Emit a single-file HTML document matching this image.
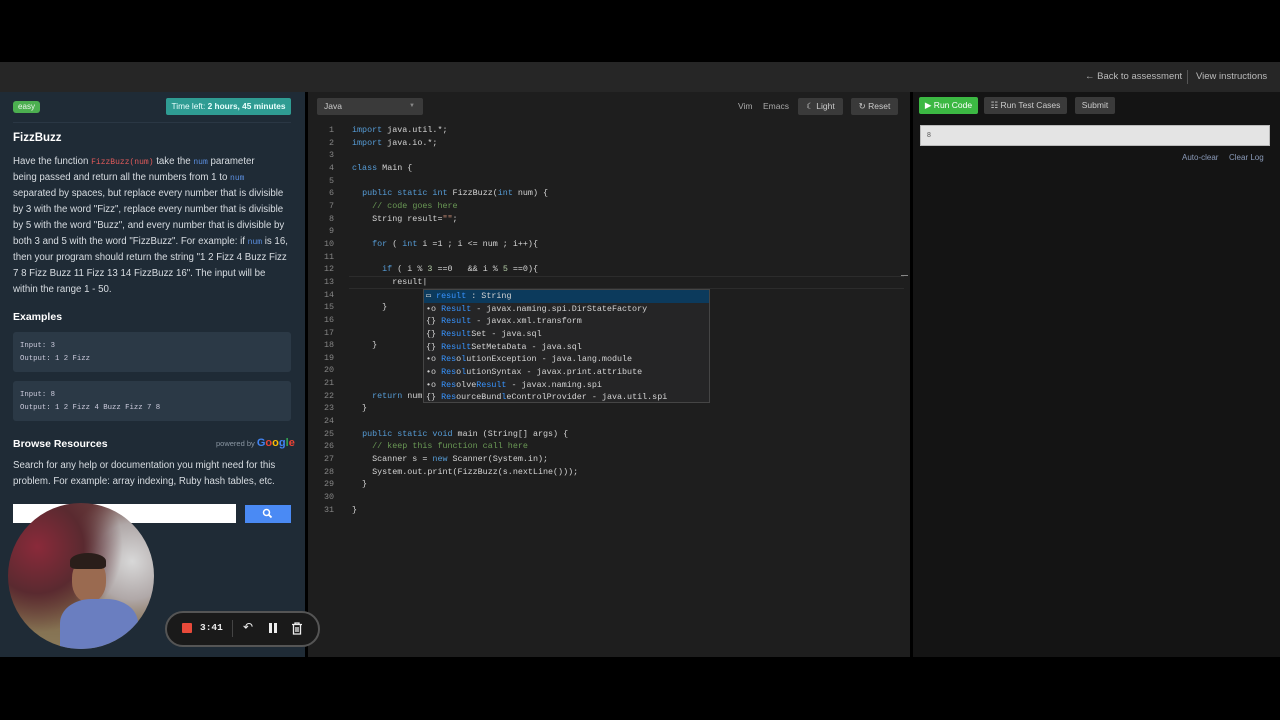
<!DOCTYPE html>
<html><head><meta charset="utf-8"><style>
*{box-sizing:border-box;margin:0;padding:0}
body{width:1280px;height:720px;background:#000;position:relative;overflow:hidden;font-family:"Liberation Sans",sans-serif}
.abs{position:absolute}
.top{left:0;top:62px;width:1280px;height:30px;background:#262626}
.left{left:0;top:92px;width:305px;height:565px;background:#1f2b36}
.ed{left:308px;top:92px;width:602px;height:565px;background:#1e1e1e}
.right{left:913px;top:92px;width:367px;height:565px;background:#141414}
.txt{color:#d8dde2;font-size:9.7px;line-height:16px}
.txt .mono{line-height:0;font-size:8px;vertical-align:baseline}
.mono{font-family:"Liberation Mono",monospace}
.code{left:310px;top:124px;font-family:"Liberation Mono",monospace;font-size:8.4px;line-height:12.65px;color:#d4d4d4;white-space:pre}
.ln{display:inline-block;width:24px;text-align:right;color:#858585;margin-right:18px}
.k{color:#569cd6}.c{color:#6a9955}.s{color:#ce9178}.n{color:#b5cea8}
.ac{left:423px;top:289px;width:287px;height:114px;background:#252526;border:1px solid #454545;font-family:"Liberation Mono",monospace;font-size:8.4px;line-height:12.65px;color:#d4d4d4;white-space:pre;padding-left:2px}
.ac div.sel{background:#0c3a5c;margin-left:-2px;padding-left:2px}
.ac b{color:#3794ff;font-weight:normal}
.btn{border-radius:2px;font-size:8.5px;color:#ccc;text-align:center;line-height:16px}
</style></head><body>
<div class="abs top"></div>
<div class="abs" style="left:1085px;top:71px;font-size:9.5px;color:#bbb">← Back to assessment</div>
<div class="abs" style="left:1187px;top:70px;width:1px;height:14px;background:#555"></div>
<div class="abs" style="left:1196px;top:71px;font-size:9.5px;color:#bbb">View instructions</div>

<div class="abs left"></div>
<div class="abs ed"></div>
<div class="abs right"></div>

<div class="abs" style="left:13px;top:101px;width:27px;height:12px;background:#4caf50;border-radius:3px;font-size:8px;color:#e8f5e9;text-align:center;line-height:12px">easy</div>
<div class="abs" style="left:166px;top:98px;width:125px;height:17px;background:#2f9c93;border-radius:2px;font-size:8.3px;color:#e8fffd;text-align:center;line-height:17px">Time left: <b>2 hours, 45 minutes</b></div>
<div class="abs" style="left:13px;top:122px;width:278px;height:1px;background:#2a3744"></div>
<div class="abs" style="left:13px;top:132px;font-size:11.5px;font-weight:bold;color:#fff">FizzBuzz</div>
<div class="abs txt" style="left:13px;top:154px;width:292px;white-space:nowrap">Have the function <span class="mono" style="color:#e05a5a">FizzBuzz(num)</span> take the <span class="mono" style="color:#5b8fe0">num</span> parameter<br>being passed and return all the numbers from 1 to <span class="mono" style="color:#5b8fe0">num</span><br>separated by spaces, but replace every number that is divisible<br>by 3 with the word "Fizz", replace every number that is divisible<br>by 5 with the word "Buzz", and every number that is divisible by<br>both 3 and 5 with the word "FizzBuzz". For example: if <span class="mono" style="color:#5b8fe0">num</span> is 16,<br>then your program should return the string "1 2 Fizz 4 Buzz Fizz<br>7 8 Fizz Buzz 11 Fizz 13 14 FizzBuzz 16". The input will be<br>within the range 1 - 50.</div>
<div class="abs" style="left:13px;top:311px;font-size:10.5px;font-weight:bold;color:#fff">Examples</div>
<div class="abs mono" style="left:13px;top:332px;width:278px;height:40px;background:#2b3946;border-radius:3px;padding:8px 7px;font-size:7.3px;line-height:13px;color:#ccd">Input: 3<br>Output: 1 2 Fizz</div>
<div class="abs mono" style="left:13px;top:381px;width:278px;height:40px;background:#2b3946;border-radius:3px;padding:8px 7px;font-size:7.3px;line-height:13px;color:#ccd">Input: 8<br>Output: 1 2 Fizz 4 Buzz Fizz 7 8</div>
<div class="abs" style="left:13px;top:438px;font-size:10.5px;font-weight:bold;color:#fff">Browse Resources</div>
<div class="abs" style="left:216px;top:437px;font-size:7.5px;color:#8a96a2">powered by <span style="font-size:11px;font-weight:bold"><span style="color:#4285f4">G</span><span style="color:#ea4335">o</span><span style="color:#fbbc05">o</span><span style="color:#4285f4">g</span><span style="color:#34a853">l</span><span style="color:#ea4335">e</span></span></div>
<div class="abs txt" style="left:13px;top:458px;width:292px;white-space:nowrap">Search for any help or documentation you might need for this<br>problem. For example: array indexing, Ruby hash tables, etc.</div>
<div class="abs" style="left:13px;top:504px;width:223px;height:19px;background:#fff"></div>
<div class="abs" style="left:245px;top:505px;width:46px;height:18px;background:#4a8af4"></div>
<svg class="abs" style="left:262px;top:508px" width="11" height="11" viewBox="0 0 11 11"><circle cx="4.5" cy="4.5" r="3" fill="none" stroke="#fff" stroke-width="1.5"/><path d="M6.5 6.5l3 3" stroke="#fff" stroke-width="1.8"/></svg>
<div class="abs" style="left:8px;top:503px;width:146px;height:146px;border-radius:50%;overflow:hidden;background:radial-gradient(circle at 20% 30%,#8a2a3a 0,#5a2a30 30%,transparent 55%),radial-gradient(circle at 85% 40%,#d8d8d8 0,#b0a8a8 25%,transparent 45%),linear-gradient(180deg,#6a4040 0%,#7a6040 55%,#8a7a5a 100%)">
<div class="abs" style="left:64px;top:55px;width:34px;height:44px;border-radius:45%;background:#9a6a50"></div>
<div class="abs" style="left:62px;top:50px;width:36px;height:16px;border-radius:50% 50% 20% 20%;background:#2a1e1a"></div>
<div class="abs" style="left:52px;top:96px;width:78px;height:60px;border-radius:40% 40% 0 0;background:#6a7ec0"></div>
</div>

<div class="abs" style="left:317px;top:98px;width:106px;height:17px;background:#3a3a3a;border-radius:2px;font-size:8.5px;color:#ccc;line-height:17px;padding-left:7px">Java<span style="position:absolute;right:8px;font-size:6px;color:#888">▼</span></div>
<div class="abs" style="left:738px;top:101px;font-size:8.5px;color:#aaa">Vim</div>
<div class="abs" style="left:763px;top:101px;font-size:8.5px;color:#aaa">Emacs</div>
<div class="abs btn" style="left:798px;top:98px;width:45px;height:17px;background:#3a3a3a;line-height:17px">☾ Light</div>
<div class="abs btn" style="left:851px;top:98px;width:47px;height:17px;background:#3a3a3a;line-height:17px">↻ Reset</div>
<div class="abs" style="left:901px;top:275px;width:7px;height:1px;background:#888"></div>
<div class="abs" style="left:349px;top:276px;width:555px;height:13px;border-top:1px solid #2c2c2c;border-bottom:1px solid #2c2c2c"></div>
<div class="abs code"><span class="ln">1</span><span class="k">import</span> java.util.*;
<span class="ln">2</span><span class="k">import</span> java.io.*;
<span class="ln">3</span>
<span class="ln">4</span><span class="k">class</span> Main {
<span class="ln">5</span>
<span class="ln">6</span>  <span class="k">public static int</span> FizzBuzz(<span class="k">int</span> num) {
<span class="ln">7</span>    <span class="c">// code goes here</span>
<span class="ln">8</span>    String result=<span class="s">""</span>;
<span class="ln">9</span>
<span class="ln">10</span>    <span class="k">for</span> ( <span class="k">int</span> i =1 ; i &lt;= num ; i++){
<span class="ln">11</span>
<span class="ln">12</span>      <span class="k">if</span> ( i % <span class="n">3</span> ==0   &amp;&amp; i % <span class="n">5</span> ==0){
<span class="ln">13</span>        result|
<span class="ln">14</span>
<span class="ln">15</span>      }
<span class="ln">16</span>
<span class="ln">17</span>
<span class="ln">18</span>    }
<span class="ln">19</span>
<span class="ln">20</span>
<span class="ln">21</span>
<span class="ln">22</span>    <span class="k">return</span> num
<span class="ln">23</span>  }
<span class="ln">24</span>
<span class="ln">25</span>  <span class="k">public static void</span> main (String[] args) {
<span class="ln">26</span>    <span class="c">// keep this function call here</span>
<span class="ln">27</span>    Scanner s = <span class="k">new</span> Scanner(System.in);
<span class="ln">28</span>    System.out.print(FizzBuzz(s.nextLine()));
<span class="ln">29</span>  }
<span class="ln">30</span>
<span class="ln">31</span>}</div>
<div class="abs ac"><div class="sel">▭ <b>result</b> : String</div><div>•o <b>Result</b> - javax.naming.spi.DirStateFactory</div><div>{} <b>Result</b> - javax.xml.transform</div><div>{} <b>Result</b>Set - java.sql</div><div>{} <b>Result</b>SetMetaData - java.sql</div><div>•o <b>Res</b>o<b>l</b>utionException - java.lang.module</div><div>•o <b>Res</b>o<b>l</b>utionSyntax - javax.print.attribute</div><div>•o <b>Res</b>olve<b>Result</b> - javax.naming.spi</div><div>{} <b>Res</b>ourceBund<b>l</b>eControlProvider - java.util.spi</div></div>

<div class="abs" style="left:165px;top:611px;width:155px;height:36px;border-radius:18px;background:#1a1a1a;border:2px solid #555;z-index:5"></div>
<div class="abs" style="left:182px;top:623px;width:10px;height:10px;background:#e84a3a;border-radius:1px;z-index:6"></div>
<div class="abs mono" style="left:200px;top:622px;font-size:9.5px;font-weight:bold;color:#eee;z-index:6">3:41</div>
<div class="abs" style="left:232px;top:620px;width:1px;height:17px;background:#444;z-index:6"></div>
<div class="abs" style="left:243px;top:620px;font-size:12px;color:#eee;z-index:6">↶</div>
<div class="abs" style="left:269px;top:623px;width:3px;height:10px;background:#eee;z-index:6"></div>
<div class="abs" style="left:274px;top:623px;width:3px;height:10px;background:#eee;z-index:6"></div>
<svg class="abs" style="left:291px;top:622px;z-index:6" width="12" height="13" viewBox="0 0 12 13"><path d="M1 2.5h10M4 2.5V1h4v1.5M2.5 3v9h7V3M5 5v5M7 5v5" fill="none" stroke="#eee" stroke-width="1.3"/></svg>

<div class="abs btn" style="left:919px;top:97px;width:59px;height:17px;background:#3cb843;color:#fff;line-height:17px">▶ Run Code</div>
<div class="abs btn" style="left:984px;top:97px;width:83px;height:17px;background:#3a3a3a;line-height:17px">☷ Run Test Cases</div>
<div class="abs btn" style="left:1075px;top:97px;width:40px;height:17px;background:#3a3a3a;line-height:17px">Submit</div>
<div class="abs" style="left:920px;top:125px;width:350px;height:21px;background:#e4e4e4;border:1px solid #bbb;font-size:7px;color:#555;line-height:19px;padding-left:6px">8</div>
<div class="abs" style="left:1182px;top:153px;font-size:8px;color:#8a9ab8">Auto-clear</div>
<div class="abs" style="left:1229px;top:153px;font-size:8px;color:#8a9ab8">Clear Log</div>
</body></html>
